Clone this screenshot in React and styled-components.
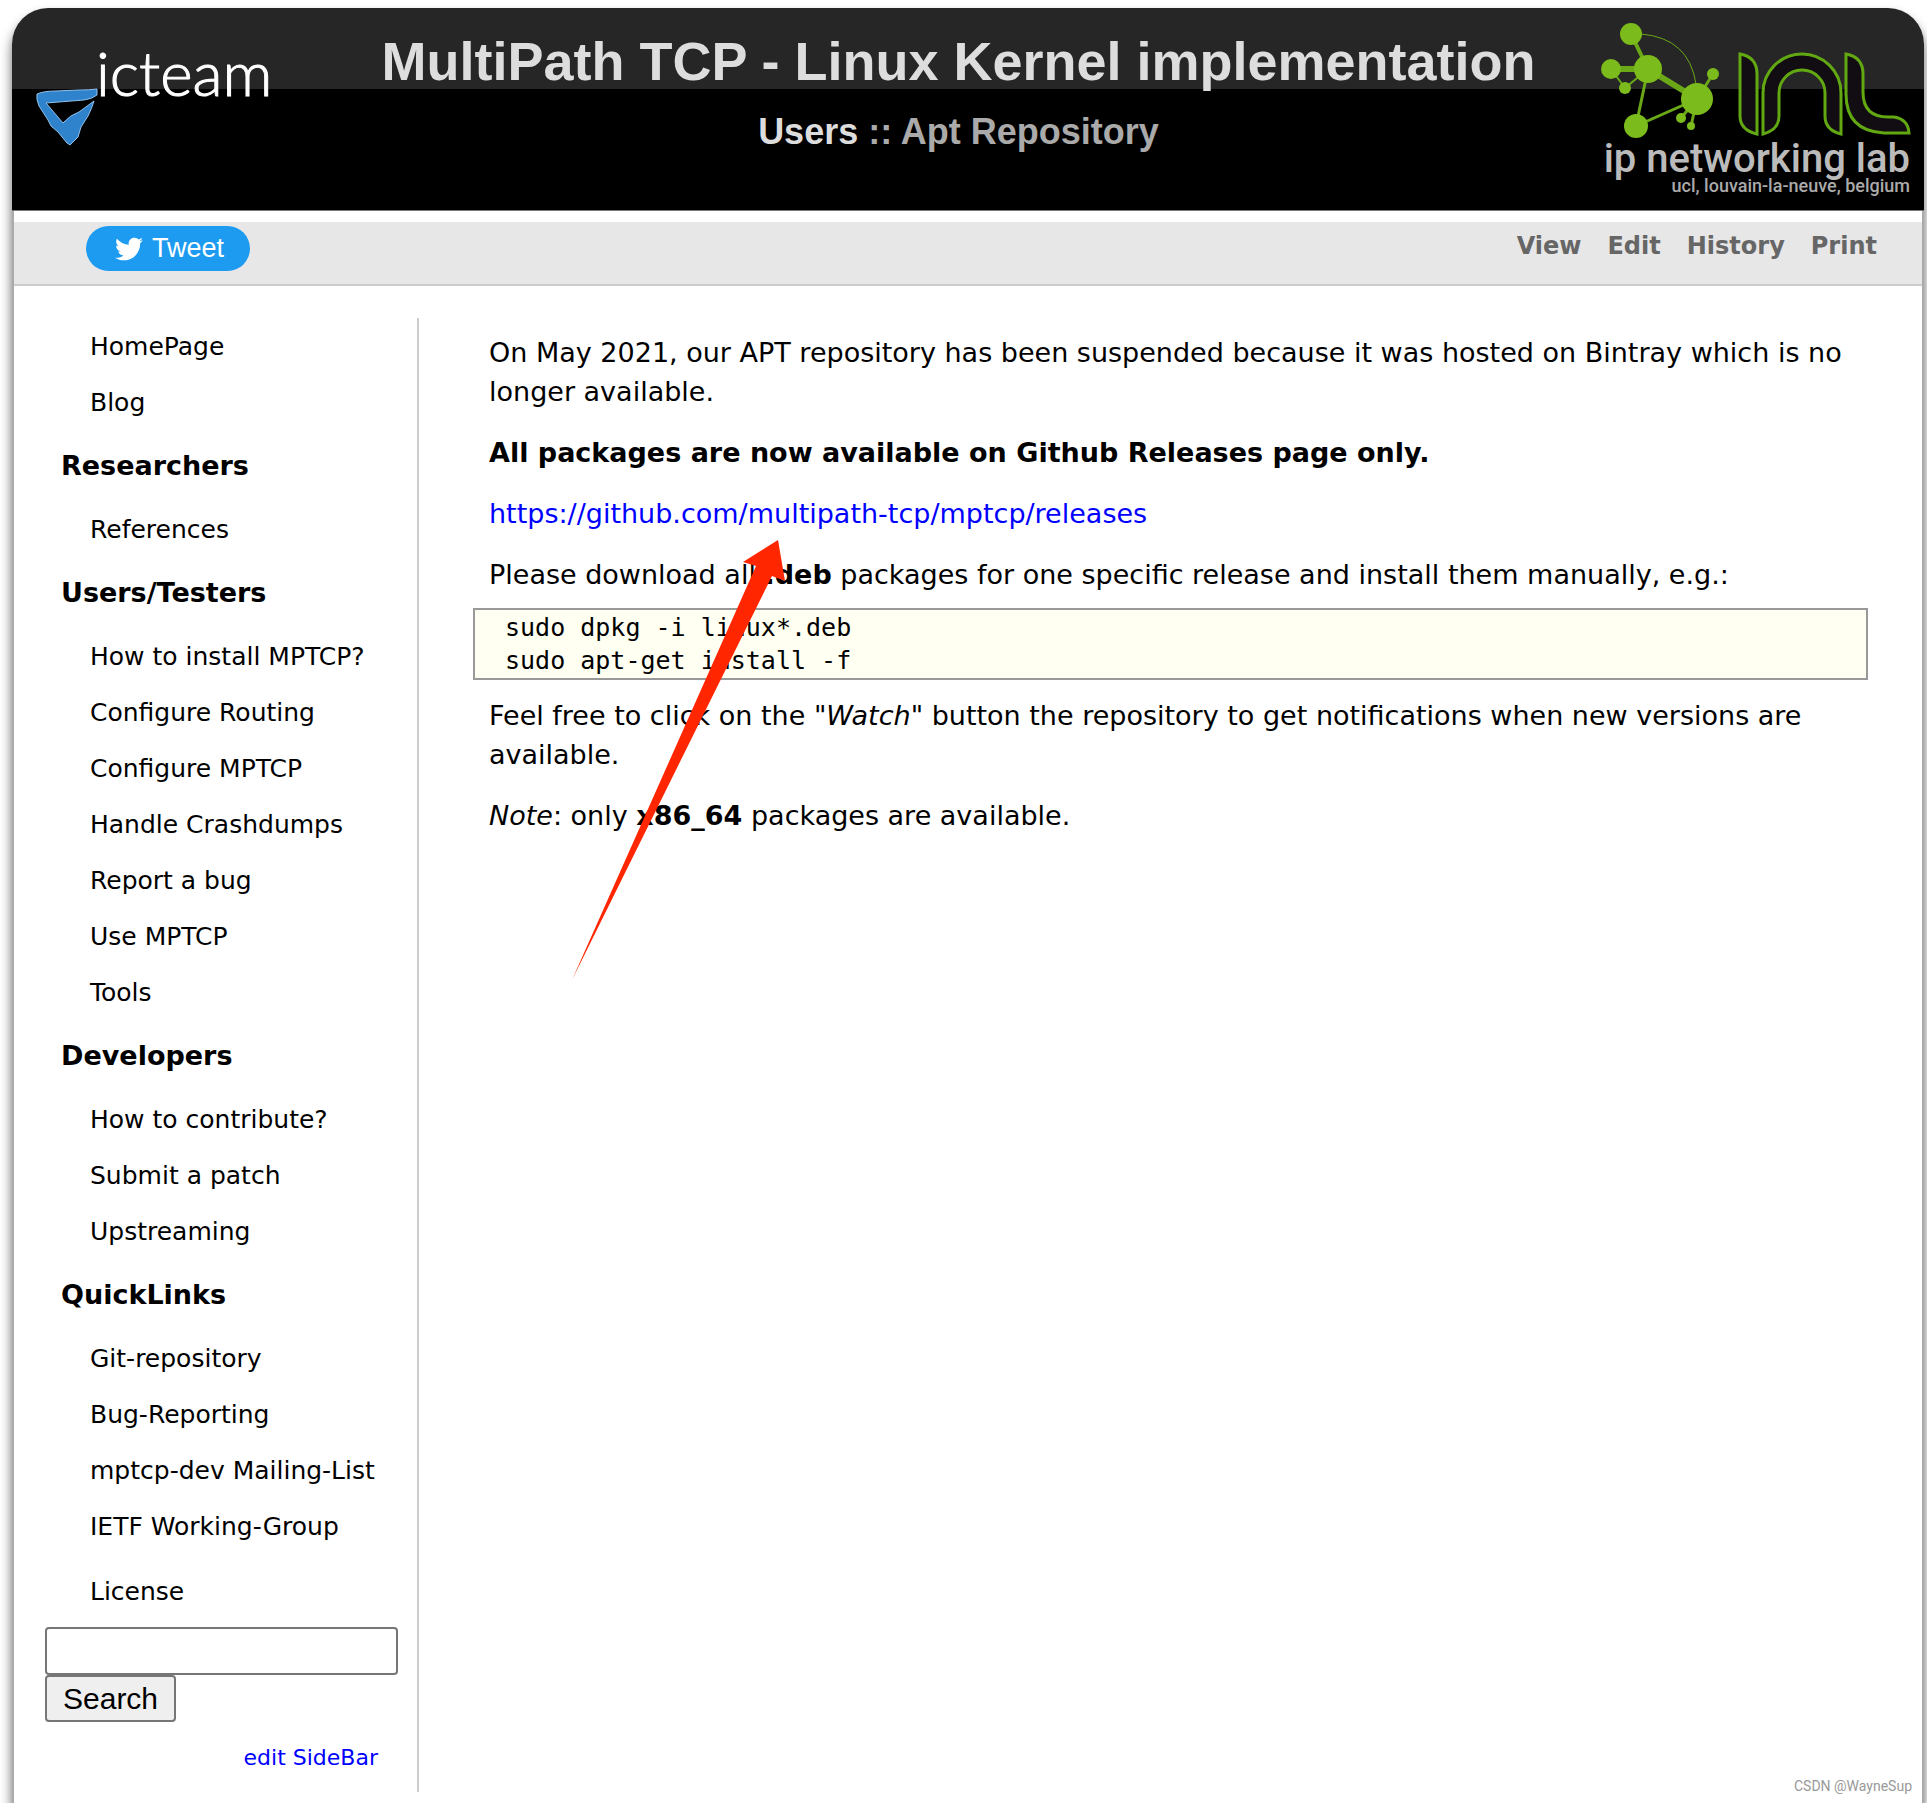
import React, { useState } from 'react';
import styled, { createGlobalStyle } from 'styled-components';
import { FaTwitter } from 'react-icons/fa';

const GlobalStyle = createGlobalStyle`
  *, *::before, *::after {
    box-sizing: border-box;
  }

  body {
    margin: 0;
    background: #fff;
    color: #000;
    font-family: Verdana, 'DejaVu Sans', sans-serif;
    font-size: 27px;
  }
`;

const Wrapper = styled.div`
  position: relative;
  padding: 8px 3px 0 12px;
  min-height: 100vh;
  display: flex;
  overflow: hidden;
`;

const Page = styled.div`
  flex: 1;
  min-width: 0;
  border-radius: 36px 36px 0 0;
  box-shadow: 0 8px 12px rgba(0, 0, 0, 0.6);
  background: #fff;
  display: flex;
  flex-direction: column;
`;

const Header = styled.header`
  display: flex;
  align-items: flex-start;
  height: 203px;
  padding-right: 13px;
  border-bottom: 1px solid #777;
  border-radius: 36px 36px 0 0;
  background: linear-gradient(to bottom, #262626 81px, #000 81px);
`;

const Titles = styled.div`
  flex: 1;
  text-align: center;
  font-family: 'Liberation Sans', Arial, sans-serif;
  font-weight: bold;
`;

const SiteTitle = styled.h1`
  margin: 20px 0 0;
  font-size: 54px;
  line-height: 66px;

  a {
    color: #ddd;
    text-decoration: none;
  }
`;

const PageTitle = styled.h2`
  margin: 17px 0 0;
  font-size: 36px;
  line-height: 42px;
  color: #aaa;

  a {
    color: #ddd;
    text-decoration: none;
  }
`;

const Frame = styled.div`
  flex: 1;
  display: flex;
  flex-direction: column;
  padding-top: 11px;
  border: solid #aaa;
  border-width: 0 2px;
`;

const Toolbar = styled.div`
  display: flex;
  align-items: flex-start;
  justify-content: space-between;
  height: 64px;
  padding: 4px 45px 0 72px;
  background: #e7e7e7;
  border-bottom: 2px solid #ccc;
`;

const TweetButton = styled.button`
  display: flex;
  align-items: center;
  gap: 9px;
  height: 45px;
  padding: 0 26px 0 29px;
  border: none;
  border-radius: 23px;
  background: #1d9bf0;
  color: #fff;
  font-family: 'Liberation Sans', Arial, sans-serif;
  font-size: 27px;
  line-height: 43px;
  cursor: pointer;
`;

const Actions = styled.nav`
  display: flex;
  gap: 26px;
  line-height: 40px;

  a {
    color: #666;
    font-size: 24px;
    font-weight: bold;
    text-decoration: none;
  }
`;

const Columns = styled.div`
  display: flex;
  align-items: flex-start;
  padding-top: 32px;
`;

const Sidebar = styled.aside`
  flex: none;
  width: 405px;
  padding: 1px 19px 18px 31px;
  border-right: 2px solid #ccc;
`;

const MenuTitle = styled.h3`
  margin: 0;
  padding: 0 16px 2px;
  font-size: 27px;
  line-height: 69px;
`;

const Menu = styled.ul`
  list-style: none;
  margin: 0;
  padding: 0 0 0 45px;
`;

const MenuItem = styled.li`
  font-size: 25px;
  line-height: 56px;
  white-space: nowrap;
  margin-top: ${props => props.$spaced ? '9px' : '0'};

  a {
    color: #000;
    text-decoration: none;
  }
`;

const SearchForm = styled.form`
  margin-top: 7px;
`;

const SearchInput = styled.input`
  display: block;
  width: 100%;
  height: 48px;
  padding: 2px 4px;
  border: 2px solid #767676;
  border-radius: 4px;
  background: #fff;
  font: 30px 'Liberation Sans', Arial, sans-serif;
`;

const SearchButton = styled.button`
  display: block;
  height: 47px;
  padding: 0 16px;
  border: 2px solid #767676;
  border-radius: 4px;
  background: #efefef;
  color: #000;
  font: 30px 'Liberation Sans', Arial, sans-serif;
  cursor: pointer;
`;

const EditSidebar = styled.p`
  margin: 20px 0 0;
  padding-right: 20px;
  text-align: right;
  font-size: 22px;
  line-height: 32px;
`;

const Link = styled.a`
  color: #00f;
  text-decoration: none;
`;

const Content = styled.main`
  flex: 1;
  min-width: 0;
  padding: 15px 54px 0;
`;

const Paragraph = styled.p`
  margin: 0 16px 22px;
  line-height: 39px;
`;

const Code = styled.pre`
  margin: -8px 0 16px;
  padding: 1px 30px;
  border: 2px solid #999;
  background: #fffff2;
  font-family: Consolas, 'DejaVu Sans Mono', monospace;
  font-size: 25px;
  line-height: 33px;
`;

const Arrow = styled.svg`
  position: absolute;
  left: 572px;
  top: 539px;
  pointer-events: none;
`;

const Watermark = styled.span`
  position: absolute;
  right: 15px;
  bottom: 8px;
  color: #999;
  font-family: Roboto, 'Liberation Sans', Arial, sans-serif;
  font-size: 14px;
  line-height: 18px;
`;

const menus = [
  { items: ['HomePage', 'Blog'] },
  { title: 'Researchers', items: ['References'] },
  {
    title: 'Users/Testers',
    items: [
      'How to install MPTCP?',
      'Configure Routing',
      'Configure MPTCP',
      'Handle Crashdumps',
      'Report a bug',
      'Use MPTCP',
      'Tools',
    ],
  },
  { title: 'Developers', items: ['How to contribute?', 'Submit a patch', 'Upstreaming'] },
  {
    title: 'QuickLinks',
    items: ['Git-repository', 'Bug-Reporting', 'mptcp-dev Mailing-List', 'IETF Working-Group', 'License'],
  },
];

const IcteamLogo = () => (
  <svg width="305" height="160" viewBox="12 8 305 160" role="img" aria-label="icteam">
    <path
      d="M37 94 Q44 91 56 91 L78 90 Q90 90 97 89 L97 95 Q92 99 84 100 L46 103 L63 123 Q70 115 79 112 L94 101 Q92 108 88 116 L81 127 L78 137 L70 145 L67 143 L58 132 L51 126 L48 120 L39 106 Q36 99 37 94 Z"
      fill="#2f83cc"
      stroke="#8fc0ea"
      strokeWidth="1"
    />
    <text x="96" y="96" fill="#fff" stroke="#fff" fontFamily="Lato, sans-serif" fontWeight="300" fontSize="62">icteam</text>
  </svg>
);

const InlLogo = () => (
  <svg width="311" height="192" viewBox="1600 8 311 192" role="img" aria-label="ip networking lab">
    <g stroke="#6aa818" fill="none">
      <path d="M1631 34 L1648 69" strokeWidth="4" />
      <path d="M1611 69 L1648 69" strokeWidth="6" />
      <path d="M1611 69 L1625 88 L1648 69" strokeWidth="2" />
      <path d="M1648 69 L1697 99" strokeWidth="6" />
      <path d="M1648 69 L1636 126 L1697 99" strokeWidth="3" />
      <path d="M1697 99 L1713 74 M1697 99 L1681 118 M1697 99 L1691 126" strokeWidth="3" />
      <path d="M1641 34 Q1689 38 1696 84" strokeWidth="1" />
    </g>
    <g fill="#7cbb1c">
      <circle cx="1631" cy="34" r="11" />
      <circle cx="1611" cy="69" r="10" />
      <circle cx="1648" cy="69" r="14" />
      <circle cx="1625" cy="88" r="6" />
      <circle cx="1713" cy="74" r="6" />
      <circle cx="1697" cy="99" r="16" />
      <circle cx="1681" cy="118" r="5" />
      <circle cx="1691" cy="126" r="4" />
      <circle cx="1636" cy="126" r="12" />
    </g>
    <g fill="#120d12" stroke="#62a812" strokeWidth="3">
      <path d="M1740 54 Q1757 57 1757 74 V134 Q1740 130 1740 116 Z" />
      <path d="M1763 134 V93 A39 39 0 0 1 1841 93 V134 Q1825 130 1825 116 V93 A23 23 0 0 0 1779 93 V116 Q1779 130 1763 134 Z" />
      <path d="M1846 54 Q1863 57 1863 74 V92 Q1863 117 1888 117 H1894 Q1908 119 1909 133 H1884 Q1846 131 1846 94 Z" />
    </g>
    <text x="1910" y="172" textAnchor="end" fill="#bbb" fontFamily="Roboto, sans-serif" fontWeight="500" fontSize="40">ip networking lab</text>
    <text x="1910" y="192" textAnchor="end" fill="#aaa" fontFamily="Roboto, sans-serif" fontWeight="500" fontSize="18">ucl, louvain-la-neuve, belgium</text>
  </svg>
);

const App = () => {
  const [query, setQuery] = useState('');

  const handleSearch = (event) => {
    event.preventDefault();
  };

  return (
    <Wrapper>
      <GlobalStyle />
      <Page>
        <Header>
          <IcteamLogo />
          <Titles>
            <SiteTitle><a href="#home">MultiPath TCP - Linux Kernel implementation</a></SiteTitle>
            <PageTitle><a href="#users">Users</a> :: Apt Repository</PageTitle>
          </Titles>
          <InlLogo />
        </Header>
        <Frame>
          <Toolbar>
            <TweetButton type="button">
              <FaTwitter size={28} />
              Tweet
            </TweetButton>
            <Actions>
              {['View', 'Edit', 'History', 'Print'].map((action) => (
                <a key={action} href={`#${action.toLowerCase()}`}>{action}</a>
              ))}
            </Actions>
          </Toolbar>
          <Columns>
            <Sidebar>
              {menus.map((menu) => (
                <nav key={menu.title || 'main'}>
                  {menu.title && <MenuTitle>{menu.title}</MenuTitle>}
                  <Menu>
                    {menu.items.map((item) => (
                      <MenuItem key={item} $spaced={item === 'License'}>
                        <a href="#page">{item}</a>
                      </MenuItem>
                    ))}
                  </Menu>
                </nav>
              ))}
              <SearchForm onSubmit={handleSearch}>
                <SearchInput
                  type="text"
                  aria-label="Search"
                  value={query}
                  onChange={(e) => setQuery(e.target.value)}
                />
                <SearchButton type="submit">Search</SearchButton>
              </SearchForm>
              <EditSidebar><Link href="#edit-sidebar">edit SideBar</Link></EditSidebar>
            </Sidebar>
            <Content>
              <Paragraph>
                On May 2021, our APT repository has been suspended because it was hosted on Bintray which is no longer available.
              </Paragraph>
              <Paragraph><strong>All packages are now available on Github Releases page only.</strong></Paragraph>
              <Paragraph>
                <Link href="https://github.com/multipath-tcp/mptcp/releases">https://github.com/multipath-tcp/mptcp/releases</Link>
              </Paragraph>
              <Paragraph>
                Please download all <strong>.deb</strong> packages for one specific release and install them manually, e.g.:
              </Paragraph>
              <Code>{'sudo dpkg -i linux*.deb\nsudo apt-get install -f'}</Code>
              <Paragraph>
                Feel free to click on the "<em>Watch</em>" button the repository to get notifications when new versions are available.
              </Paragraph>
              <Paragraph><em>Note</em>: only <strong>x86_64</strong> packages are available.</Paragraph>
            </Content>
          </Columns>
        </Frame>
      </Page>
      <Arrow width="214" height="442" viewBox="572 539 214 442" aria-hidden="true">
        <path d="M778 540 L785 581 L772 576 L572 980 L756 566 L743 562 Z" fill="#ff2600" />
      </Arrow>
      <Watermark>CSDN @WayneSup</Watermark>
    </Wrapper>
  );
};

export default App;
